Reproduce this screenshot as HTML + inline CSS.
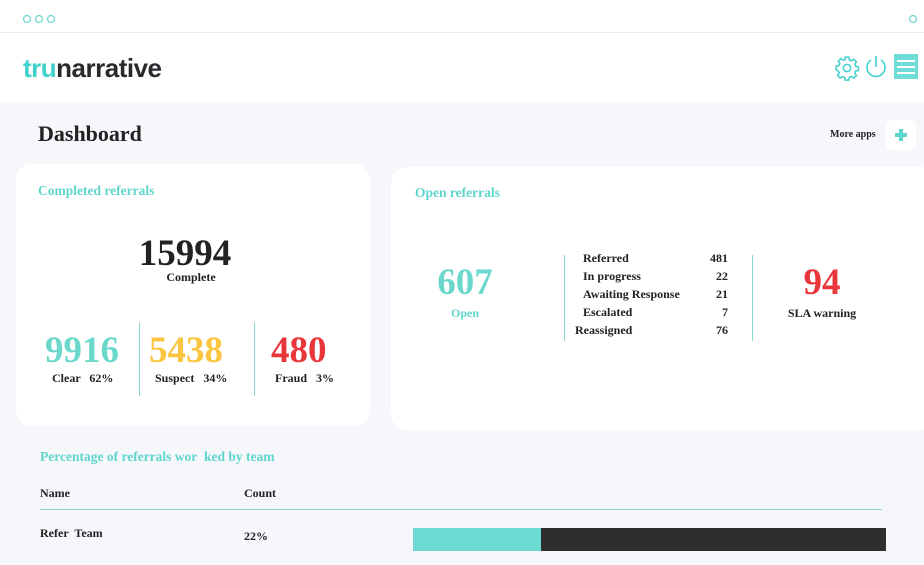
<!DOCTYPE html>
<html><head><style>
*{margin:0;padding:0;box-sizing:border-box}
body{width:924px;height:565px;overflow:hidden;background:#f6f7fb;font-family:"Liberation Serif",serif;color:#222;position:relative}
.a{position:absolute}
.t{color:#5fd5cc}
.b{font-weight:bold}
.card{position:absolute;background:#fff;border-radius:16px}
.c{text-align:center}
</style></head><body>
<div class="a" style="left:0;top:0;width:924px;height:102px;background:#fff"></div>
<div class="a" style="left:0;top:32px;width:924px;height:1px;background:#ececec"></div>
<svg class="a" style="left:22px;top:13px" width="40" height="12"><g fill="none" stroke="#6fd8d2" stroke-width="1.3"><circle cx="5" cy="6" r="3.5"/><circle cx="17" cy="6" r="3.5"/><circle cx="29" cy="6" r="3.5"/></g></svg>
<svg class="a" style="left:907px;top:13px" width="12" height="12"><circle cx="6" cy="6" r="3.5" fill="none" stroke="#6fd8d2" stroke-width="1.3"/></svg>
<div class="a" style="left:23px;top:53px;font-family:'Liberation Sans',sans-serif;font-weight:bold;font-size:26px;letter-spacing:-0.5px;line-height:30px"><span style="color:#3fd1cb">tru</span><span style="color:#2a2a2e">narrative</span></div>
<svg class="a" style="left:834px;top:55px" width="26" height="26" viewBox="0 0 24 24"><g fill="none" stroke="#3fd1cb" stroke-width="1.4"><circle cx="12" cy="12" r="3.3"/><path d="M10.3 2h3.4l.5 2.6 1.9.8 2.2-1.5 2.4 2.4-1.5 2.2.8 1.9 2.6.5v3.4l-2.6.5-.8 1.9 1.5 2.2-2.4 2.4-2.2-1.5-1.9.8-.5 2.6h-3.4l-.5-2.6-1.9-.8-2.2 1.5-2.4-2.4 1.5-2.2-.8-1.9L2 13.7v-3.4l2.6-.5.8-1.9-1.5-2.2 2.4-2.4 2.2 1.5 1.9-.8z"/></g></svg>
<svg class="a" style="left:864px;top:54px" width="24" height="26" viewBox="0 0 24 26"><g fill="none" stroke="#3fd1cb" stroke-width="1.6"><path d="M12 2v11"/><path d="M7 6a9 9 0 1 0 10 0"/></g></svg>
<div class="a" style="left:894px;top:54px;width:24px;height:25px;background:#6fdcd5"><div class="a" style="left:3px;top:6px;width:18px;height:2px;background:#fff"></div><div class="a" style="left:3px;top:12px;width:18px;height:2px;background:#fff"></div><div class="a" style="left:3px;top:18px;width:18px;height:2px;background:#fff"></div></div>
<div class="a b" style="left:38px;top:121px;font-size:22px">Dashboard</div>
<div class="a b" style="left:830px;top:129px;font-size:10px">More apps</div>
<div class="a" style="left:886px;top:120px;width:30px;height:30px;background:#fff;border-radius:6px"><div class="a" style="left:9px;top:13px;width:12px;height:4px;background:#5fd5cc"></div><div class="a" style="left:13px;top:9px;width:4px;height:12px;background:#5fd5cc"></div></div>

<div class="card" style="left:16px;top:164px;width:354px;height:262px"></div>
<div class="a t b" style="left:38px;top:183px;font-size:13.5px">Completed referrals</div>
<div class="a b c" style="left:114px;top:233px;width:142px;font-size:37px;line-height:42px">15994</div>
<div class="a b c" style="left:120px;top:270px;width:142px;font-size:12px">Complete</div>
<div class="a b" style="left:45px;top:330px;font-size:37px;line-height:42px;color:#6cd8cc">9916</div>
<div class="a b" style="left:52px;top:371px;font-size:12px">Clear &nbsp; 62%</div>
<div class="a" style="left:139px;top:322px;width:1px;height:74px;background:#8ad6d1"></div>
<div class="a b" style="left:149px;top:330px;font-size:37px;line-height:42px;color:#fbc53f">5438</div>
<div class="a b" style="left:155px;top:371px;font-size:12px">Suspect &nbsp; 34%</div>
<div class="a" style="left:254px;top:322px;width:1px;height:74px;background:#8ad6d1"></div>
<div class="a b" style="left:271px;top:330px;font-size:37px;line-height:42px;color:#e8363b">480</div>
<div class="a b" style="left:275px;top:371px;font-size:12px">Fraud &nbsp; 3%</div>

<div class="card" style="left:391px;top:167px;width:545px;height:263px"></div>
<div class="a t b" style="left:415px;top:185px;font-size:13.5px">Open referrals</div>
<div class="a b c" style="left:425px;top:262px;width:80px;font-size:37px;line-height:42px;color:#6cd8cc">607</div>
<div class="a b c t" style="left:425px;top:306px;width:80px;font-size:12px">Open</div>
<div class="a" style="left:564px;top:255px;width:1px;height:86px;background:#8ad6d1"></div>
<div class="a b" style="left:575px;top:249px;width:153px;font-size:12px;line-height:18px">
<div style="display:flex;justify-content:space-between;padding-left:8px"><span>Referred</span><span>481</span></div>
<div style="display:flex;justify-content:space-between;padding-left:8px"><span>In progress</span><span>22</span></div>
<div style="display:flex;justify-content:space-between;padding-left:8px"><span>Awaiting Response</span><span>21</span></div>
<div style="display:flex;justify-content:space-between;padding-left:8px"><span>Escalated</span><span>7</span></div>
<div style="display:flex;justify-content:space-between"><span>Reassigned</span><span>76</span></div>
</div>
<div class="a" style="left:752px;top:255px;width:1px;height:86px;background:#8ad6d1"></div>
<div class="a b c" style="left:782px;top:262px;width:80px;font-size:37px;line-height:42px;color:#e8363b">94</div>
<div class="a b c" style="left:772px;top:306px;width:100px;font-size:12px">SLA warning</div>

<div class="a t b" style="left:40px;top:449px;font-size:13.5px">Percentage of referrals wor&nbsp; ked by team</div>
<div class="a b" style="left:40px;top:486px;font-size:12px">Name</div>
<div class="a b" style="left:244px;top:486px;font-size:12px">Count</div>
<div class="a" style="left:40px;top:509px;width:842px;height:1px;background:#8ad6d1"></div>
<div class="a b" style="left:40px;top:526px;font-size:12px">Refer&nbsp; Team</div>
<div class="a b" style="left:244px;top:529px;font-size:12px">22%</div>
<div class="a" style="left:413px;top:528px;width:473px;height:23px;background:#2e2e2e"></div>
<div class="a" style="left:413px;top:528px;width:128px;height:23px;background:#6dd9d3"></div>
</body></html>
